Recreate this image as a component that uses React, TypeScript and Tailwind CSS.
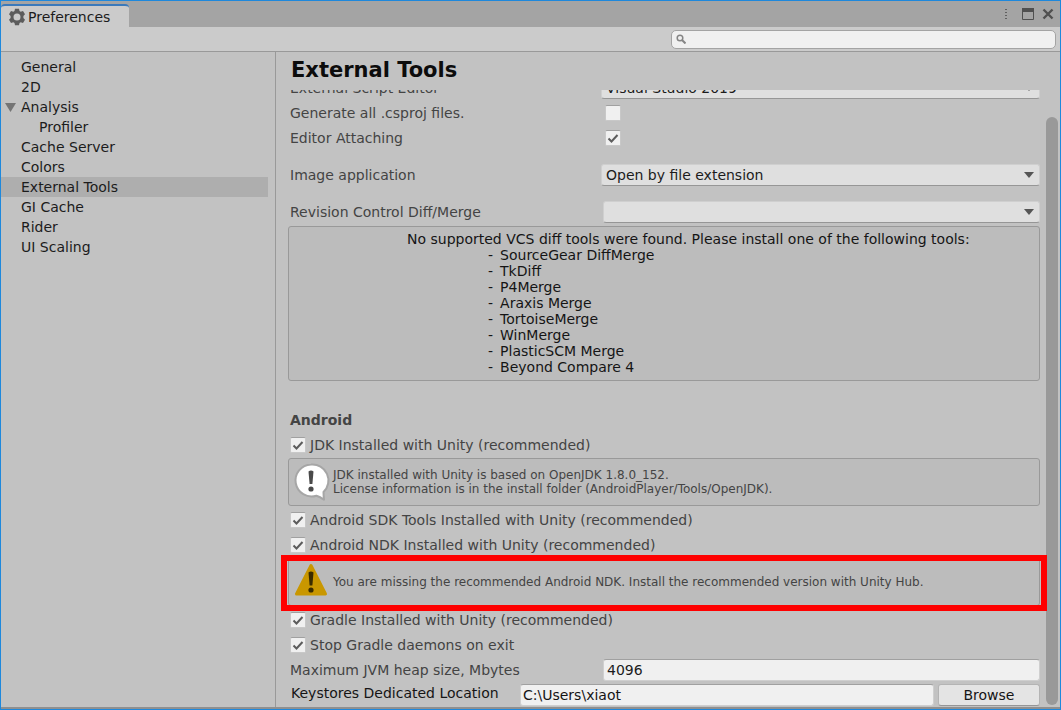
import React, { useState } from 'react';
import clsx from 'clsx';

type NavItem = { key: string; name: string; child?: boolean; expanded?: boolean };

const NAV_ITEMS: NavItem[] = [
  { key: 'general', name: 'General' },
  { key: '2d', name: '2D' },
  { key: 'analysis', name: 'Analysis', expanded: true },
  { key: 'profiler', name: 'Profiler', child: true },
  { key: 'cache', name: 'Cache Server' },
  { key: 'colors', name: 'Colors' },
  { key: 'external', name: 'External Tools' },
  { key: 'gi', name: 'GI Cache' },
  { key: 'rider', name: 'Rider' },
  { key: 'ui', name: 'UI Scaling' },
];

const DIFF_TOOLS = [
  'SourceGear DiffMerge',
  'TkDiff',
  'P4Merge',
  'Araxis Merge',
  'TortoiseMerge',
  'WinMerge',
  'PlasticSCM Merge',
  'Beyond Compare 4',
];

const GearIcon = () => (
  <svg width="18" height="18" viewBox="0 0 18 18" className="shrink-0" aria-hidden="true">
    <path
      fillRule="evenodd"
      fill="#5c5c5c"
      d="M7 .8h4l.5 2.200 1.200.7 2.300-.8 2 3.300-1.600 1.700v2.200l1.600 1.700-2 3.300-2.300-.8-1.200.7-.5 2.200H7l-.5-2.200-1.200-.7-2.300.8-2-3.300 1.600-1.700V7.900L1 6.200l2-3.300 2.300.8 1.200-.7zM9 5.500a3.500 3.500 0 1 0 0 7 3.500 3.500 0 0 0 0-7z"
    />
  </svg>
);

const InfoIcon = () => (
  <svg width="38" height="40" viewBox="0 0 38 40" className="shrink-0" aria-hidden="true">
    <path
      d="M18 2.500a16 16 0 1 0 5.500 31.200q3.500 1 7.500 4-.5-4.500-.5-7.700A16 16 0 0 0 18 2.500z"
      fill="#fff"
      stroke="#a6a6a6"
      strokeWidth="2"
      strokeLinejoin="round"
    />
    <path d="M15.500 9.500q2.500-2 5 0L19.400 22h-2.800z" fill="#4a4a4a" />
    <circle cx="18" cy="27" r="2.600" fill="#4a4a4a" />
  </svg>
);

const WarningIcon = () => (
  <svg width="38" height="40" viewBox="0 0 38 40" className="shrink-0" aria-hidden="true">
    <path
      d="M18 3.500 L32.500 32 H3.500 Z"
      fill="#c99700"
      stroke="#c99700"
      strokeWidth="3"
      strokeLinejoin="round"
    />
    <path d="M15.500 10.500q2.500-2 5 0L19.400 23.500h-2.800z" fill="#3a2c00" />
    <circle cx="18" cy="28" r="2.600" fill="#3a2c00" />
  </svg>
);

type CheckboxProps = { id: string; defaultChecked?: boolean };

const Checkbox = ({ id, defaultChecked = false }: CheckboxProps) => (
  <span className="relative block h-4 w-4 shrink-0">
    <input
      id={id}
      type="checkbox"
      defaultChecked={defaultChecked}
      className="peer block h-4 w-4 appearance-none rounded-xs border border-[#c8c8c8] border-t-[#a0a0a0] bg-[#f0f0f0]"
    />
    <svg
      viewBox="0 0 16 16"
      className="pointer-events-none absolute inset-0 hidden h-4 w-4 peer-checked:block"
      aria-hidden="true"
    >
      <path d="M3.500 8.500 6.500 11.500 12.500 5" fill="none" stroke="#5c5c5c" strokeWidth="2" />
    </svg>
  </span>
);

type SelectProps = { id: string; options: string[]; className?: string };

const Select = ({ id, options, className }: SelectProps) => (
  <div className={clsx('relative min-w-0 flex-1', className)}>
    <select
      id={id}
      className="block h-[22px] w-full appearance-none rounded-[3px] border border-[#cfcfcf] border-b-[#969696] bg-[#dfdfdf] pl-1 text-[#1c1c1c]"
    >
      {options.map((option) => (
        <option key={option}>{option}</option>
      ))}
    </select>
    <svg
      width="10"
      height="6"
      viewBox="0 0 10 6"
      className="pointer-events-none absolute top-2 right-1.5"
      aria-hidden="true"
    >
      <path d="M0 0h10L5 6z" fill="#555" />
    </svg>
  </div>
);

type FieldRowProps = { id: string; label: string; className?: string; children: React.ReactNode };

const FieldRow = ({ id, label, className, children }: FieldRowProps) => (
  <div className={clsx('flex h-[25px] items-center', className)}>
    <label htmlFor={id} className="w-[313px] shrink-0 pl-0.5">
      {label}
    </label>
    {children}
  </div>
);

const ToggleRow = ({ id, label }: { id: string; label: string }) => (
  <div className="flex h-[25px] items-center gap-1 pl-0.5">
    <Checkbox id={id} defaultChecked />
    <label htmlFor={id}>{label}</label>
  </div>
);

type HelpBoxProps = { icon: React.ReactNode; children: React.ReactNode };

const HelpBox = ({ icon, children }: HelpBoxProps) => (
  <div className="my-px flex h-12 items-center rounded-[3px] border border-[#999] bg-[#bcbcbc] pl-1 text-xs leading-[14px]">
    {icon}
    <div className="pl-0.5">{children}</div>
  </div>
);

const Sidebar = () => {
  const [active, setActive] = useState('external');

  return (
    <nav className="w-[275px] shrink-0 border-r border-[#999] pt-[5px] pr-[7px]">
      {NAV_ITEMS.map((item) => (
        <button
          key={item.key}
          type="button"
          onClick={() => setActive(item.key)}
          className={clsx(
            'flex h-5 w-full items-center text-left text-[#1c1c1c]',
            item.child && 'pl-[18px]',
            item.key === active && 'bg-[#aeaeae]'
          )}
        >
          <span className="flex w-5 shrink-0 pl-1">
            {item.expanded && (
              <svg width="11" height="9" viewBox="0 0 11 9" aria-hidden="true">
                <path d="M0 0h11L5.500 9z" fill="#747474" />
              </svg>
            )}
          </span>
          {item.name}
        </button>
      ))}
    </nav>
  );
};

const App = () => (
  <div className="flex h-screen flex-col overflow-hidden border border-[#1e88dc] bg-[#c2c2c2] font-['DejaVu_Sans',sans-serif] text-sm leading-4 text-[#444]">
    {/* Title bar */}
    <header className="flex h-[26px] shrink-0 items-end justify-between bg-[#a4a4a4]">
      <div className="flex h-[23px] w-32 items-center gap-0.5 rounded-t-[4px] border-t-2 border-[#3a79bb] bg-[#cbcbcb] pl-[7px] text-[#1c1c1c]">
        <GearIcon />
        Preferences
      </div>
      <div className="flex h-full items-center gap-2 pr-1.5">
        <button type="button" aria-label="Window menu">
          <svg width="12" height="12" viewBox="0 0 12 12" fill="#606060">
            <path d="M3 1h2v1H3zM3 4h2v1H3zM3 7h2v1H3zM3 10h2v1H3z" />
          </svg>
        </button>
        <button type="button" aria-label="Maximize">
          <svg width="12" height="12" viewBox="0 0 12 12">
            <path d="M.5.5h11v11H.5z" fill="none" stroke="#505050" />
            <path d="M0 0h12v4H0z" fill="#505050" />
          </svg>
        </button>
        <button type="button" aria-label="Close">
          <svg width="12" height="12" viewBox="0 0 12 12">
            <path d="M1.500 1.500l9 9M10.500 1.500l-9 9" stroke="#505050" strokeWidth="2.400" />
          </svg>
        </button>
      </div>
    </header>

    {/* Search toolbar */}
    <div className="flex h-[25px] shrink-0 items-center justify-end border-b border-[#999] bg-[#cbcbcb] pr-1">
      <div className="relative w-[385px]">
        <input
          type="search"
          aria-label="Search preferences"
          className="block h-[19px] w-full rounded-[5px] border border-[#a3a3a3] bg-[#f0f0f0] pl-5 text-xs"
        />
        <svg
          width="10"
          height="10"
          viewBox="0 0 10 10"
          className="absolute top-1 left-[5px]"
          fill="none"
          stroke="#858585"
          aria-hidden="true"
        >
          <circle cx="4" cy="4" r="2.800" strokeWidth="1.500" />
          <path d="M6 6l3.500 3.500" strokeWidth="2" />
        </svg>
      </div>
    </div>

    <div className="flex min-h-0 flex-1">
      <Sidebar />

      <main className="flex min-w-0 flex-1 flex-col pl-3">
        <h1 className="h-[38px] shrink-0 pl-[3px] text-[21px] leading-9 font-bold text-[#0c0c0c]">
          External Tools
        </h1>

        <div className="flex min-h-0 flex-1">
          <div className="min-w-0 flex-1 overflow-hidden">
            {/* The list is scrolled a little, so its first row is cut by the heading */}
            <div className="-mt-[15px]">
              <FieldRow id="script-editor" label="External Script Editor">
                <Select id="script-editor" options={['Visual Studio 2019']} />
              </FieldRow>
              <FieldRow id="csproj" label="Generate all .csproj files.">
                <div className="pl-1">
                  <Checkbox id="csproj" />
                </div>
              </FieldRow>
              <FieldRow id="attaching" label="Editor Attaching">
                <div className="pl-1">
                  <Checkbox id="attaching" defaultChecked />
                </div>
              </FieldRow>
              <FieldRow id="image-app" label="Image application" className="mt-3">
                <Select id="image-app" options={['Open by file extension']} />
              </FieldRow>
              <FieldRow id="diff-tool" label="Revision Control Diff/Merge" className="mt-3">
                <Select id="diff-tool" options={['']} className="ml-0.5" />
              </FieldRow>

              <div className="mt-0.5 rounded-[3px] border border-[#999] bg-[#bcbcbc] pt-1 pb-[5px] pl-[118px] text-[#151515]">
                <p>No supported VCS diff tools were found. Please install one of the following tools:</p>
                <ul className="pl-[81px]">
                  {DIFF_TOOLS.map((tool) => (
                    <li key={tool} className="flex gap-[7px]">
                      <span>-</span>
                      {tool}
                    </li>
                  ))}
                </ul>
              </div>

              <h2 className="mt-[27px] h-6 pl-0.5 leading-6 font-bold">Android</h2>
              <ToggleRow id="jdk" label="JDK Installed with Unity (recommended)" />
              <HelpBox icon={<InfoIcon />}>
                <p>JDK installed with Unity is based on OpenJDK 1.8.0_152.</p>
                <p>License information is in the install folder (AndroidPlayer/Tools/OpenJDK).</p>
              </HelpBox>
              <ToggleRow id="sdk" label="Android SDK Tools Installed with Unity (recommended)" />
              <ToggleRow id="ndk" label="Android NDK Installed with Unity (recommended)" />
              <HelpBox icon={<WarningIcon />}>
                <p>
                  You are missing the recommended Android NDK. Install the recommended version with
                  Unity Hub.
                </p>
              </HelpBox>
              <ToggleRow id="gradle" label="Gradle Installed with Unity (recommended)" />
              <ToggleRow id="daemons" label="Stop Gradle daemons on exit" />
              <FieldRow id="heap" label="Maximum JVM heap size, Mbytes">
                <input
                  id="heap"
                  type="text"
                  defaultValue="4096"
                  className="ml-0.5 h-[22px] min-w-0 flex-1 rounded-[3px] border border-[#cfcfcf] border-t-[#a0a0a0] bg-[#f0f0f0] pl-[3px] text-[#1c1c1c]"
                />
              </FieldRow>
              <div className="flex h-[25px] items-center gap-1 text-[#151515]">
                <label htmlFor="keystore" className="w-[228px] shrink-0 pb-1 pl-[3px]">
                  Keystores Dedicated Location
                </label>
                <input
                  id="keystore"
                  type="text"
                  defaultValue="C:\Users\xiaot"
                  className="h-[22px] min-w-0 flex-1 rounded-[3px] border border-[#cfcfcf] border-t-[#a0a0a0] bg-[#f0f0f0] pl-0.5"
                />
                <button
                  type="button"
                  className="h-[22px] w-[102px] rounded-[3px] border border-[#b4b4b4] border-b-[#969696] bg-[#e4e4e4]"
                >
                  Browse
                </button>
              </div>
            </div>
          </div>

          {/* Scrollbar */}
          <div className="w-5 shrink-0 pt-[27px] pr-0.5 pb-0.5 pl-1.5">
            <div className="h-full rounded-full bg-[#999]" />
          </div>
        </div>
      </main>
    </div>
    <div className="h-0.5 shrink-0 bg-[#8f8f8f]" />

    {/* Highlight drawn over the missing NDK warning */}
    <div className="pointer-events-none absolute top-[555px] right-[14px] left-[281px] h-14 border-6 border-[#ff0000]" />
  </div>
);

export default App;
